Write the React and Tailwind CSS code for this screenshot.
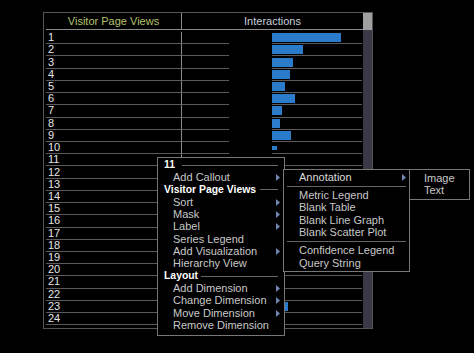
import React from "react";

const bars = [69, 31, 21, 18, 13, 23, 10, 8, 19, 5, 0, 0, 0, 0, 0, 0, 0, 0, 0, 0, 0, 0, 16, 0];

function Arrow() {
  return (
    <svg width="4" height="7" viewBox="0 0 4 7" className="shrink-0">
      <polygon points="0,0 4,3.5 0,7" fill="#6f86b0" />
    </svg>
  );
}

function Item({ label, arrow, pl = "pl-[15px]", pr = "pr-[4px]", color = "text-[#c8c8c8]" }) {
  return (
    <div className={`flex items-center h-[12.35px] ${pl} ${pr} ${color} whitespace-nowrap`}>
      <span className="flex-1 leading-none">{label}</span>
      {arrow && <Arrow />}
    </div>
  );
}

function Header({ label, gap = "ml-[5px]" }) {
  return (
    <div className="flex items-center h-[12.35px] pl-[6px] pr-[6px] text-white font-bold whitespace-nowrap">
      <span className="leading-none text-[10.4px]">{label}</span>
      <div className={`flex-1 h-px bg-[#666] ${gap}`} />
    </div>
  );
}

function Sep() {
  return (
    <div className="h-[6px] flex items-center px-[3px]">
      <div className="flex-1 h-px bg-[#666]" />
    </div>
  );
}

export default function App() {
  return (
    <div
      className="relative w-[474px] h-[353px] bg-black overflow-hidden text-[11px]"
      style={{ fontFamily: '"Liberation Sans", Arial, sans-serif' }}
    >
      {/* Table */}
      <div className="ml-[43px] pt-[12px]">
        <div className="w-[330px] h-[317px] border border-[#555] flex">
          <div className="w-[319px] flex flex-col">
            <div className="flex h-[17px] border-b border-[#8a8a8a] ml-[2px]">
              <div className="w-[136px] border-r border-[#8a8a8a] flex items-center justify-center text-[#b5c26a]">
                Visitor Page Views
              </div>
              <div className="flex-1 flex items-center justify-center text-[#c4d0dc]">Interactions</div>
            </div>
            <div className="pt-[2px] flex flex-col ml-[2px]">
              {bars.map((w, i) => (
                <div key={i} className="flex h-[12.22px]">
                  <div className="w-[136px] border-b border-r border-b-[#5a5a5a] border-r-[#8a8a8a] flex items-center text-[#e6e6e6] pl-[2px] leading-none">
                    {i + 1}
                  </div>
                  <div className="w-[47px] border-b border-[#5a5a5a]" />
                  <div className="w-[43px]" />
                  <div className="w-[90px] border-b border-[#5a5a5a] flex items-center">
                    {w > 0 && (
                      <div
                        className={`bg-[#2a7cca] ${i === 9 ? "h-[4px]" : "h-[9px]"}`}
                        style={{ width: w }}
                      />
                    )}
                  </div>
                </div>
              ))}
            </div>
          </div>
          <div className="w-[9px] bg-[#3a3a46] flex flex-col">
            <div className="h-[17px] bg-[#a0a0a0]" />
          </div>
        </div>
      </div>

      {/* Context menu */}
      <div className="absolute left-[157px] top-[157px] w-[128px] h-[179px] border border-[#777] bg-black pt-[1px]">
        <Header label="11" gap="ml-[7px]" />
        <Item label="Add Callout" arrow />
        <Header label="Visitor Page Views" gap="ml-[4px]" />
        <Item label="Sort" arrow />
        <Item label="Mask" arrow />
        <Item label="Label" arrow />
        <Item label="Series Legend" />
        <Item label="Add Visualization" arrow />
        <Item label="Hierarchy View" />
        <Header label="Layout" gap="ml-[3px]" />
        <Item label="Add Dimension" arrow />
        <Item label="Change Dimension" arrow />
        <Item label="Move Dimension" arrow />
        <Item label="Remove Dimension" />
      </div>

      {/* Submenu */}
      <div className="absolute left-[283px] top-[169px] w-[127px] h-[103px] border border-[#777] bg-black pt-[1px]">
        <Item label="Annotation" arrow pr="pr-[3px]" color="text-[#dcdcdc]" />
        <Sep />
        <Item label="Metric Legend" />
        <Item label="Blank Table" />
        <Item label="Blank Line Graph" />
        <Item label="Blank Scatter Plot" />
        <Sep />
        <Item label="Confidence Legend" />
        <Item label="Query String" />
      </div>

      {/* Sub-submenu */}
      <div className="absolute left-[409px] top-[169px] w-[61px] h-[31px] border border-[#777] bg-black pt-[2px]">
        <Item label="Image" pl="pl-[14px]" />
        <Item label="Text" pl="pl-[14px]" />
      </div>
    </div>
  );
}
